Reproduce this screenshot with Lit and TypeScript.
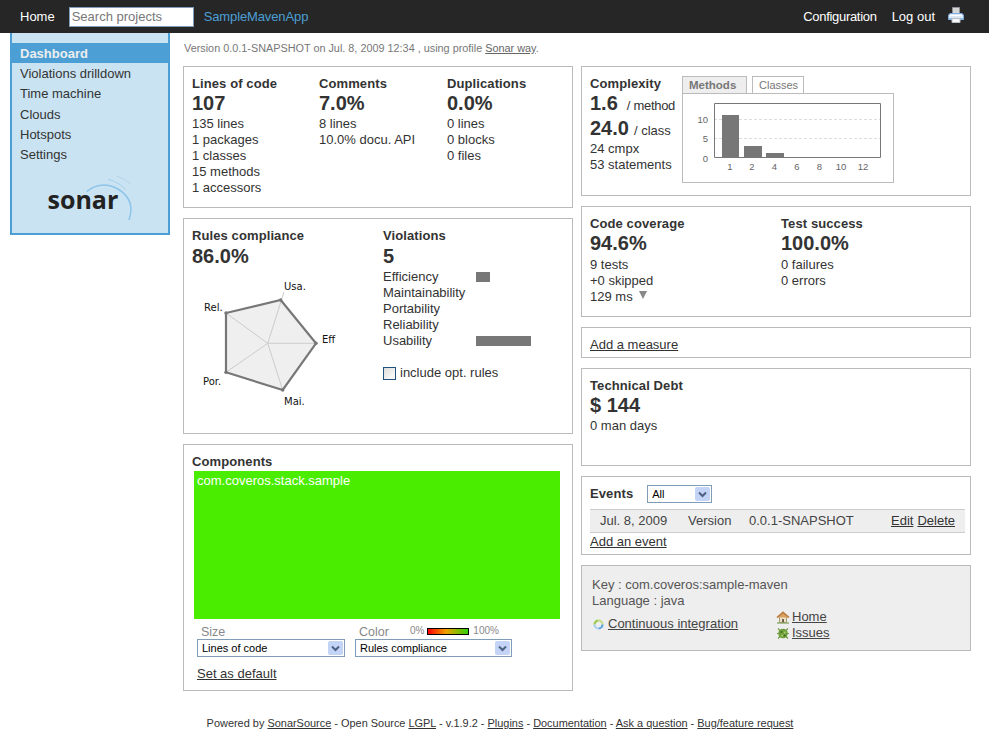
import { LitElement, html, css, svg } from "lit";
import { customElement } from "lit/decorators.js";

const printer = html`<svg class="printer" width="16" height="16" viewBox="0 0 16 16">
  <path d="M4.500 0.500h7v8h-7z" fill="#d4d6d8" stroke="#8e9296"/>
  <path d="M0.500 9q0-2.500 2.500-2.500h10q2.500 0 2.500 2.500v3.500h-15z" fill="#dbe7f5" stroke="#7fb0e4"/>
  <path d="M2 8.500h12" stroke="#ffffff"/>
  <path d="M1 11h14v1.500h-14z" fill="#8fbdec"/>
  <path d="M4 11.500h8v4h-8z" fill="#f7f8f9" stroke="#b9bec4"/>
</svg>`;

const sonarLogo = html`<svg class="logo" width="100" height="55" viewBox="0 0 100 55">
  <path d="M46.700 21.700Q61 10 78 19Q96 30 89 50" fill="none" stroke="#8cc4ea" stroke-width="1.500"/>
  <path d="M68 9.300Q79 12 86 20" fill="none" stroke="#a5cfe9" stroke-width="1"/>
  <path d="M76.700 6Q85 9 90.700 14" fill="none" stroke="#b2d5ea" stroke-width="1"/>
  <text class="logo-text" x="7.500" y="39">sonar</text>
</svg>`;

const ciIcon = html`<svg class="ic" width="11" height="11" viewBox="0 0 11 11">
  <path d="M1.500 5.500a4 4 0 0 1 4-4" fill="none" stroke="#9ccb4e" stroke-width="2.200"/>
  <path d="M5.500 1.500a4 4 0 0 1 4 4" fill="none" stroke="#c5dc8a" stroke-width="2.200"/>
  <path d="M9.500 5.500a4 4 0 0 1-4 4" fill="none" stroke="#5aa3e0" stroke-width="2.200"/>
  <path d="M5.500 9.500a4 4 0 0 1-4-4" fill="none" stroke="#a8d0f0" stroke-width="2.200"/>
</svg>`;

const homeIcon = html`<svg class="ic" width="14" height="13" viewBox="0 0 14 13">
  <path d="M3.500 6v5.500h7v-5.500" fill="#ece2c8" stroke="#a89a78"/>
  <path d="M1 6.500L7 1.200 13 6.500" fill="#d9a060" stroke="#b87a3c" stroke-width="1.500"/>
  <path d="M6 8h2v3.500h-2z" fill="#6f6248"/>
  <path d="M1 12h12" stroke="#7fa05a" stroke-width="1.200"/>
</svg>`;

const bugIcon = html`<svg class="ic" width="14" height="14" viewBox="0 0 14 14">
  <path d="M2 2.500l3 3M12 2.500l-3 3M1 7.500h3M13 7.500h-3M2 12.500l3-3M12 12.500l-3-3" stroke="#6f9a48" stroke-width="1.200"/>
  <circle cx="7" cy="7.500" r="4.800" fill="#6fa03c"/>
  <circle cx="5.500" cy="6" r="1" fill="#3f6a24"/>
  <circle cx="8.700" cy="6.500" r="1" fill="#a8d070"/>
  <circle cx="6" cy="9.500" r="1" fill="#a8d070"/>
  <circle cx="8.700" cy="9.500" r="1" fill="#3f6a24"/>
</svg>`;

const pts = [[88.7, 30], [124, 73.3], [90.7, 120], [34, 102.3], [34, 43]];
const ptStr = pts.map((p) => p.join(",")).join(" ");
const radar = svg`
  <polygon points="${ptStr}" fill="#efefef"/>
  <g stroke="#cccccc" stroke-width="1">
    <line x1="75.700" y1="73.300" x2="92" y2="22"/>
    <line x1="75.700" y1="73.300" x2="124" y2="73.300"/>
    <line x1="75.700" y1="73.300" x2="90.700" y2="120"/>
    <line x1="75.700" y1="73.300" x2="34" y2="102.300"/>
    <line x1="75.700" y1="73.300" x2="34" y2="43"/>
  </g>
  <polygon points="${ptStr}" fill="none" stroke="#777" stroke-width="2.200"/>
  ${pts.map((p) => svg`<circle cx="${p[0]}" cy="${p[1]}" r="1.700" fill="#777"/>`)}
  <text class="rl" x="92" y="20">Usa.</text>
  <text class="rl" x="130" y="73">Eff</text>
  <text class="rl" x="92" y="135">Mai.</text>
  <text class="rl" x="11" y="115">Por.</text>
  <text class="rl" x="12" y="41">Rel.</text>
`;

const histogram = svg`
  <g stroke="#dddddd" stroke-dasharray="3 2">
    <line x1="31" y1="16.500" x2="197" y2="16.500"/>
    <line x1="31" y1="35.500" x2="197" y2="35.500"/>
  </g>
  <path d="M31.500 0.500H197.500V54.500H31.500z" fill="none" stroke="#777"/>
  <rect x="39" y="12" width="17" height="42" fill="#777"/>
  <rect x="61" y="43" width="18" height="11" fill="#777"/>
  <rect x="83" y="50" width="18" height="4" fill="#777"/>
  ${[["10", 19.5], ["5", 38.5], ["0", 58.5]].map(([t, y]) => svg`<text class="hy" x="25" y="${y}">${t}</text>`)}
  ${[["1", 47], ["2", 69], ["4", 91.5], ["6", 114], ["8", 136.5], ["10", 158], ["12", 180]].map(([t, x]) => svg`<text class="hx" x="${x}" y="67">${t}</text>`)}
`;

@customElement("app-root")
export class AppRoot extends LitElement {
  static styles = css`
    :host {
      display: block;
      width: 989px;
      font-family: "Liberation Sans", Arial, sans-serif;
      font-size: 13px;
      line-height: 16px;
      color: #333;
    }
    * { box-sizing: border-box; }
    a { color: #333; text-decoration: underline; }
    .header {
      height: 33px;
      background: #262626;
      display: flex;
      align-items: center;
      padding-left: 20px;
      color: #fff;
    }
    .search {
      margin-left: 14px;
      width: 125px;
      height: 20px;
      border: 1px solid #7f9db9;
      padding: 0 2px;
      background: #fff;
      font: 13px "Liberation Sans", Arial, sans-serif;
      outline: none;
    }
    .search::placeholder { color: #777; }
    .project { margin-left: 10px; color: #4b9fd5; letter-spacing: -0.12px; }
    .hright { margin-left: auto; display: flex; align-items: center; padding-right: 25px; }
    .cfg { letter-spacing: -0.3px; }
    .hright span + span { margin-left: 15px; }
    .printer { margin: 0 0 3px 13px; }
    .layout { display: flex; align-items: flex-start; }
    .side {
      margin-left: 10px;
      width: 160px;
      height: 202px;
      flex: none;
      background: #cae3f2;
      border: 2px solid #4b9fd5;
      border-top: 0;
      padding-top: 10px;
    }
    .nav { height: 20.300px; line-height: 22px; padding-left: 8px; }
    .nav.on { background: #4b9fd5; color: #eee; font-weight: bold; height: 20px; }
    .logo { display: block; margin: 5.500px 0 0 28px; }
    .logo-text { font: bold 25px "Open Sans", sans-serif; fill: #222; }
    .main { margin-left: 13px; width: 788px; flex: none; }
    .version { height: 33px; padding: 7px 0 0 1px; font-size: 10.850px; color: #777; }
    .version a { color: #666; }
    .cols { display: grid; grid-template-columns: 390px 390px; column-gap: 8px; align-items: start; }
    .col { display: flex; flex-direction: column; row-gap: 10px; }
    .card { border: 1px solid #bbb; padding: 9px 8px 0; background: #fff; }
    .grid3 { display: grid; grid-template-columns: 127px 128px 1fr; }
    .t { font-weight: bold; letter-spacing: 0.1px; }
    .v { font-weight: bold; font-size: 20px; line-height: 23px; margin-bottom: 1px; }
    .h-loc { height: 142px; }
    .h-rules { height: 216px; }
    .h-comp { height: 247px; }
    .h-cplx { height: 130px; }
    .h-cov { height: 111px; }
    .h-add { height: 31px; }
    .h-debt { height: 98px; }
    .h-ev { height: 79px; padding-top: 8px; }
    .h-info { height: 86px; background: #eee; color: #555; padding-top: 11px; }
    .h-info a { color: #444; }
    .rules { display: flex; }
    .rules .v { line-height: 25px; margin-bottom: 0; }
    .rules-l { width: 191px; height: 190px; }
    .radar { display: block; margin: 1px 0 0 0; }
    .rl { font: 10px "DejaVu Sans", sans-serif; fill: #111; }
    .vrow { display: flex; height: 16px; align-items: center; }
    .vrow .n { width: 93px; }
    .bar { height: 10px; background: #777; }
    .check { display: flex; align-items: center; margin-top: 16px; }
    .box {
      width: 13px; height: 13px; border: 1px solid #1c5180;
      background: linear-gradient(135deg, #dcdcd7, #fff);
      margin-right: 4px;
    }
    .treemap {
      margin: 2px 0 0 2px;
      width: 366px; height: 148px;
      background: #4aec00;
      color: #fff;
      padding: 2px 3px;
    }
    .comp-t { margin-bottom: -1px; }
    .tm-controls { display: flex; margin: 4px 0 0 5px; font-size: 12.500px; color: #888; }
    .tm-a { width: 158px; }
    .tm-b { width: 157px; }
    .lab { height: 16px; padding: 2px 0 0 4px; display: flex; align-items: center; }
    .legend { display: flex; align-items: center; margin: -2px 0 0 21px; font-size: 10px; }
    .grad {
      width: 42px; height: 7px; margin: 0 4px 0 3px;
      border: 1px solid #000;
      background: linear-gradient(to right, #f00, #f0a000 45%, #2fd000);
    }
    .select {
      height: 18px;
      border: 1px solid #7f9db9;
      background: #fff;
      display: flex;
      align-items: center;
      justify-content: space-between;
      padding: 0 1px 0 4px;
      font-size: 11px;
      color: #000;
    }
    .sel-a { width: 148px; }
    .sel-b { width: 157px; }
    .sel-c { width: 65px; }
    .drop {
      width: 15px; height: 14px;
      border-radius: 2px;
      background: #c3d4f7;
      display: flex; align-items: center; justify-content: center;
    }
    .default { margin: 9px 0 0 5px; }
    .cplx { display: flex; }
    .cplx-l { width: 92px; flex: none; white-space: nowrap; }
    .v2 { font-weight: bold; font-size: 20px; line-height: 23px; }
    .v2 + .v2 { margin-top: 2px; }
    .cplx-rows { margin-top: 1px; }
    .unit { font-weight: normal; font-size: 13px; margin-left: 5px; line-height: 1; }
    .unit.m { margin-left: 9px; letter-spacing: -0.3px; }
    .tabs { display: flex; column-gap: 5px; }
    .tab {
      height: 18px; border: 1px solid #bbb; font-size: 11px; line-height: 16px;
      padding: 0 6px; color: #777;
    }
    .tab.on { background: #eee; font-weight: bold; width: 65px; font-size: 11.500px; }
    .tab.off { border-bottom: 0; width: 52px; }
    .panel { width: 212px; height: 90px; border: 1px solid #bbb; margin-top: -1px; padding: 9px 0 0 0; }
    .hist { display: block; overflow: visible; }
    .hy { font: 9.500px "Liberation Sans", sans-serif; fill: #666; text-anchor: end; }
    .hx { font: 9.500px "Liberation Sans", sans-serif; fill: #666; text-anchor: middle; }
    .cov { display: grid; grid-template-columns: 191px 1fr; }
    .cov .rows { margin-top: 2px; }
    .tri { display: inline-block; margin-left: 6px; width: 0; height: 0; border: 4.500px solid transparent; border-top: 8px solid #888; border-bottom: 0; vertical-align: 2px; }
    .ev-h { display: flex; align-items: center; height: 18px; }
    .ev-h .sel-c { margin-left: 14px; }
    .ev-row {
      margin-top: 6px;
      width: 375px; height: 24px;
      background: #eee;
      border-top: 1px solid #ccc;
      border-bottom: 1px solid #ccc;
      display: flex; align-items: center;
      padding: 0 10px;
      color: #444;
    }
    .ev-d { width: 88px; }
    .ev-k { width: 61px; }
    .ev-x { margin-left: auto; display: flex; column-gap: 4px; }
    .ev-row a { color: #333; }
    .ev-add { margin-top: 1px; }
    .info-k { padding-left: 2px; }
    .links { display: flex; padding-left: 3px; }
    .ci { display: flex; align-items: center; width: 183px; height: 30px; }
    .ci .ic { margin-right: 4px; }
    .sl { display: flex; align-items: center; height: 16px; }
    .sl .ic { margin-right: 2px; }
    .footer { margin-top: 24px; height: 16px; width: 1000px; text-align: center; font-size: 10.950px; line-height: 16px; }
    .footer a { color: #333; }
  `;

  render() {
    const arrow = html`<span class="drop"><svg width="9" height="7" viewBox="0 0 9 7"><path d="M1 1.500l3.500 3.500 3.500-3.500" fill="none" stroke="#4d6185" stroke-width="2"/></svg></span>`;
    return html`
      <div class="header">
        <span>Home</span>
        <input class="search" placeholder="Search projects" />
        <span class="project">SampleMavenApp</span>
        <div class="hright"><span class="cfg">Configuration</span><span>Log out</span>${printer}</div>
      </div>
      <div class="layout">
        <div class="side">
          <div class="nav on">Dashboard</div>
          <div class="nav">Violations drilldown</div>
          <div class="nav">Time machine</div>
          <div class="nav">Clouds</div>
          <div class="nav">Hotspots</div>
          <div class="nav">Settings</div>
          ${sonarLogo}
        </div>
        <div class="main">
          <div class="version">Version 0.0.1-SNAPSHOT on Jul. 8, 2009 12:34 , using profile <a>Sonar way</a>.</div>
          <div class="cols">
            <div class="col">
              <div class="card h-loc grid3">
                <div><div class="t">Lines of code</div><div class="v">107</div><div>135 lines</div><div>1 packages</div><div>1 classes</div><div>15 methods</div><div>1 accessors</div></div>
                <div><div class="t">Comments</div><div class="v">7.0%</div><div>8 lines</div><div>10.0% docu. API</div></div>
                <div><div class="t">Duplications</div><div class="v">0.0%</div><div>0 lines</div><div>0 blocks</div><div>0 files</div></div>
              </div>
              <div class="card h-rules rules">
                <div class="rules-l">
                  <div class="t">Rules compliance</div>
                  <div class="v">86.0%</div>
                  <svg class="radar" width="170" height="140" viewBox="0 0 170 140">${radar}</svg>
                </div>
                <div>
                  <div class="t">Violations</div>
                  <div class="v">5</div>
                  <div>
                    <div class="vrow"><span class="n">Efficiency</span><div class="bar" style="width:14px"></div></div>
                    <div class="vrow"><span class="n">Maintainability</span></div>
                    <div class="vrow"><span class="n">Portability</span></div>
                    <div class="vrow"><span class="n">Reliability</span></div>
                    <div class="vrow"><span class="n">Usability</span><div class="bar" style="width:55px"></div></div>
                  </div>
                  <div class="check"><span class="box"></span>include opt. rules</div>
                </div>
              </div>
              <div class="card h-comp">
                <div class="t comp-t">Components</div>
                <div class="treemap">com.coveros.stack.sample</div>
                <div class="tm-controls">
                  <div class="tm-a"><div class="lab">Size</div><div class="select sel-a">Lines of code${arrow}</div></div>
                  <div class="tm-b"><div class="lab">Color<span class="legend">0%<span class="grad"></span>100%</span></div><div class="select sel-b">Rules compliance${arrow}</div></div>
                </div>
                <div class="default"><a>Set as default</a></div>
              </div>
            </div>
            <div class="col">
              <div class="card h-cplx cplx">
                <div class="cplx-l">
                  <div class="t">Complexity</div>
                  <div class="v2">1.6<span class="unit m">/ method</span></div>
                  <div class="v2">24.0<span class="unit">/ class</span></div>
                  <div class="cplx-rows"><div>24 cmpx</div><div>53 statements</div></div>
                </div>
                <div>
                  <div class="tabs"><div class="tab on">Methods</div><div class="tab off">Classes</div></div>
                  <div class="panel"><svg class="hist" width="210" height="72" viewBox="0 0 210 72">${histogram}</svg></div>
                </div>
              </div>
              <div class="card h-cov cov">
                <div><div class="t">Code coverage</div><div class="v">94.6%</div><div class="rows"><div>9 tests</div><div>+0 skipped</div><div>129 ms<span class="tri"></span></div></div></div>
                <div><div class="t">Test success</div><div class="v">100.0%</div><div class="rows"><div>0 failures</div><div>0 errors</div></div></div>
              </div>
              <div class="card h-add"><a>Add a measure</a></div>
              <div class="card h-debt">
                <div class="t">Technical Debt</div>
                <div class="v">$ 144</div>
                <div>0 man days</div>
              </div>
              <div class="card h-ev">
                <div class="ev-h"><span class="t">Events</span><div class="select sel-c">All${arrow}</div></div>
                <div class="ev-row"><span class="ev-d">Jul. 8, 2009</span><span class="ev-k">Version</span><span>0.0.1-SNAPSHOT</span><span class="ev-x"><a>Edit</a><a>Delete</a></span></div>
                <div class="ev-add"><a>Add an event</a></div>
              </div>
              <div class="card h-info">
                <div class="info-k">Key : com.coveros:sample-maven</div>
                <div class="info-k">Language : java</div>
                <div class="links">
                  <div class="ci">${ciIcon}<a>Continuous integration</a></div>
                  <div>
                    <div class="sl">${homeIcon}<a>Home</a></div>
                    <div class="sl">${bugIcon}<a>Issues</a></div>
                  </div>
                </div>
              </div>
            </div>
          </div>
        </div>
      </div>
      <div class="footer">Powered by <a>SonarSource</a> - Open Source <a>LGPL</a> - v.1.9.2 - <a>Plugins</a> - <a>Documentation</a> - <a>Ask a question</a> - <a>Bug/feature request</a></div>
    `;
  }
}
